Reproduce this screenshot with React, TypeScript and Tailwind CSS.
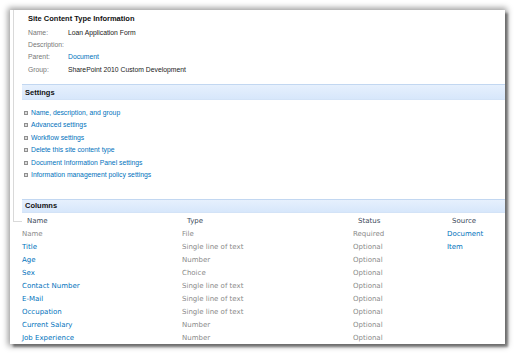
import React from "react";

const sans = { fontFamily: '"Liberation Sans", Arial, sans-serif' };
const verd = { fontFamily: '"DejaVu Sans", Verdana, sans-serif' };

const infoRows: [string, string, boolean][] = [
  ["Name:", "Loan Application Form", false],
  ["Description:", "", false],
  ["Parent:", "Document", true],
  ["Group:", "SharePoint 2010 Custom Development", false],
];

const links = [
  "Name, description, and group",
  "Advanced settings",
  "Workflow settings",
  "Delete this site content type",
  "Document Information Panel settings",
  "Information management policy settings",
];

const cols: { name: string; type: string; status: string; source: string; gray?: boolean }[] = [
  { name: "Name", type: "File", status: "Required", source: "Document", gray: true },
  { name: "Title", type: "Single line of text", status: "Optional", source: "Item" },
  { name: "Age", type: "Number", status: "Optional", source: "" },
  { name: "Sex", type: "Choice", status: "Optional", source: "" },
  { name: "Contact Number", type: "Single line of text", status: "Optional", source: "" },
  { name: "E-Mail", type: "Single line of text", status: "Optional", source: "" },
  { name: "Occupation", type: "Single line of text", status: "Optional", source: "" },
  { name: "Current Salary", type: "Number", status: "Optional", source: "" },
  { name: "Job Experience", type: "Number", status: "Optional", source: "" },
];

function Band({ title, className }: { title: string; className?: string }) {
  return (
    <div
      className={
        "shrink-0 flex items-center pl-[3px] border-t border-[#c2d7f1] border-b border-b-[#d3e3f7] bg-gradient-to-b from-[#e6f0fd] to-[#d7e7fb] " +
        (className || "")
      }
    >
      <span className="text-[7.5px] font-bold text-[#111] leading-none" style={sans}>
        {title}
      </span>
    </div>
  );
}

export default function App() {
  return (
    <div className="w-[517px] h-[356px] bg-white overflow-hidden pt-[10px] pl-[10px]">
      <div className="w-[495px] h-[334px] bg-white flex overflow-hidden shadow-[3px_3px_2px_0_rgba(0,0,0,0.4),0_0_6px_2px_rgba(0,0,0,0.4)]">
        <div className="w-[3px] shrink-0" />
        <div className="w-[9px] shrink-0 h-[212px] border-l border-b border-[#d9d9d9]" />
        <div className="flex-1 flex flex-col min-w-0">
          {/* info */}
          <div className="pl-[6px] shrink-0" style={sans}>
            <div className="h-[12px] mt-[3px] flex items-center text-[7.5px] font-bold text-[#111]">
              Site Content Type Information
            </div>
            <div className="mt-[2px] flex flex-col">
              {infoRows.map(([l, v, link], i) => (
                <div
                  key={l}
                  className={"h-[12px] flex items-center text-[6.8px] " + (i === 3 ? "mt-[1px]" : "")}
                >
                  <span className="w-[40px] text-[#777]">{l}</span>
                  <span className={link ? "text-[#0072bc]" : "text-[#222]"}>{v}</span>
                </div>
              ))}
            </div>
          </div>

          <Band title="Settings" className="mt-[8px] h-[16px] pt-[2px]" />

          <div className="mt-[6.5px] shrink-0 flex flex-col pl-[2px]" style={sans}>
            {links.map((t) => (
              <div key={t} className="h-[12.5px] flex items-center gap-[3px]">
                <span className="w-[4px] h-[4px] border border-[#8f8f8f] bg-[#dcdcdc] shrink-0" />
                <span className="text-[6.8px] text-[#0072bc]">{t}</span>
              </div>
            ))}
          </div>

          <Band title="Columns" className="mt-[17px] h-[14px] pt-[1px]" />

          <div className="mt-[2.5px] shrink-0" style={verd}>
            <div className="grid grid-cols-[160px_171px_94px_1fr] h-[13px] items-center text-[7px] text-[#3c4a5a]">
              <span className="pl-[5px]">Name</span>
              <span className="pl-[5px]">Type</span>
              <span className="pl-[5px]">Status</span>
              <span className="pl-[5px]">Source</span>
            </div>
            {cols.map((c) => (
              <div
                key={c.name}
                className="grid grid-cols-[160px_171px_94px_1fr] h-[13px] items-center text-[7px] whitespace-nowrap"
              >
                <span className={c.gray ? "text-[#8a8a8a]" : "text-[#0072bc]"}>{c.name}</span>
                <span className="text-[#8a8a8a]">{c.type}</span>
                <span className="text-[#8a8a8a]">{c.status}</span>
                <span className="text-[#0072bc]">{c.source}</span>
              </div>
            ))}
          </div>
        </div>
      </div>
    </div>
  );
}
